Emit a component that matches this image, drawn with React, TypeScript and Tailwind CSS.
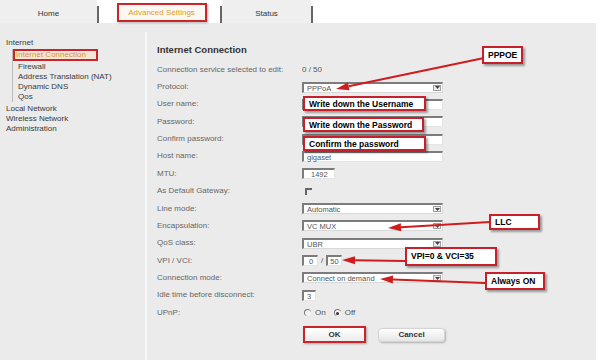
import type { ReactNode } from 'react'

const font = "font-['Liberation_Sans',Arial,sans-serif]"

function Select({ value }: { value: string }) {
  return (
    <div className="flex h-[11px] w-[141px] border-t-2 border-l-2 border-t-[#7c7c7c] border-l-[#7c7c7c] border-b border-r border-b-[#d8d8d8] border-r-[#d8d8d8] bg-white">
      <div className="flex-1 pl-[3px] text-[7.5px] leading-[9px] text-[#555]">{value}</div>
      <div className="m-[1px] flex w-[8px] items-center justify-center border border-[#a0a0a0] bg-[#ececec]">
        <svg width="5" height="3" viewBox="0 0 5 3">
          <path d="M0 0H5L2.5 3Z" fill="#444" />
        </svg>
      </div>
    </div>
  )
}

function Input({ value = '', w = 'w-[141px]', pad = 'pl-[3px]' }: { value?: string; w?: string; pad?: string }) {
  return (
    <div
      className={`h-[11px] ${w} ${pad} border-t-2 border-l-2 border-t-[#7c7c7c] border-l-[#7c7c7c] border-b border-r border-b-[#e4e4e4] border-r-[#e4e4e4] bg-white text-[7.5px] leading-[9px] text-[#555]`}
    >
      {value}
    </div>
  )
}

function Radio({ on }: { on?: boolean }) {
  return (
    <div className="flex h-[7px] w-[7px] items-center justify-center rounded-full border-t border-l border-[#777] bg-[#f4f4f4]">
      {on && <div className="h-[3px] w-[3px] rounded-full bg-[#333]" />}
    </div>
  )
}

const rows: [string, ReactNode][] = [
  ['Connection service selected to edit:', <span className="text-[8px] text-[#555]">0 / 50</span>],
  ['Protocol:', <Select value="PPPoA" />],
  ['User name:', <Input />],
  ['Password:', <Input />],
  ['Confirm password:', <Input />],
  ['Host name:', <Input value="gigaset" />],
  ['MTU:', <Input value="1492" w="w-[33px]" pad="pl-[7px]" />],
  ['As Default Gateway:', <div className="ml-[3px] h-[7px] w-[7px] border-t-2 border-l-2 border-[#666]" />],
  ['Line mode:', <Select value="Automatic" />],
  ['Encapsulation:', <Select value="VC MUX" />],
  ['QoS class:', <Select value="UBR" />],
  [
    'VPI / VCI:',
    <div className="flex items-center gap-[3px] text-[8px] text-[#555]">
      <Input value="0" w="w-[16px]" pad="pl-[5px]" />
      <span>/</span>
      <Input value="50" w="w-[16px]" pad="pl-[2px]" />
    </div>,
  ],
  ['Connection mode:', <Select value="Connect on demand" />],
  ['Idle time before disconnect:', <Input value="3" w="w-[14px]" pad="pl-[3px]" />],
  [
    'UPnP:',
    <div className="flex items-center pl-[2px] text-[8px] text-[#555]">
      <Radio />
      <span className="ml-[4px] mr-[8px]">On</span>
      <Radio on />
      <span className="ml-[4px]">Off</span>
    </div>,
  ],
]

const notes = [
  { text: 'PPPOE', cls: 'left-[482px] top-[46px] w-[41px] h-[18px] pt-[3px]' },
  { text: 'Write down the Username', cls: 'left-[303px] top-[96px] w-[123px] h-[15px] pt-[2px]' },
  { text: 'Write down the Password', cls: 'left-[303px] top-[117px] w-[121px] h-[15px] pt-[2px]' },
  { text: 'Confirm the password', cls: 'left-[303px] top-[136px] w-[123px] h-[15px] pt-[2px]' },
  { text: 'LLC', cls: 'left-[489px] top-[214px] w-[51px] h-[16px] pt-[2px]' },
  { text: 'VPI=0 & VCI=35', cls: 'left-[405px] top-[247px] w-[92px] h-[19px] pt-[3px]' },
  { text: 'Always ON', cls: 'left-[485px] top-[272px] w-[60px] h-[18px] pt-[3px]' },
]

const arrows: [number, number, number, number][] = [
  [484, 58, 336, 89],
  [490, 222, 388, 228],
  [405, 261, 342, 260],
  [485, 283, 380, 279],
]

function Arrow({ a }: { a: [number, number, number, number] }) {
  const [x1, y1, x2, y2] = a
  const len = Math.hypot(x2 - x1, y2 - y1)
  const ux = (x2 - x1) / len
  const uy = (y2 - y1) / len
  const bx = x2 - ux * 13
  const by = y2 - uy * 13
  const px = -uy * 4
  const py = ux * 4
  return (
    <g>
      <line x1={x1} y1={y1} x2={bx} y2={by} stroke="#cf1d1d" strokeWidth="2" />
      <polygon points={`${x2},${y2} ${bx + px},${by + py} ${bx - px},${by - py}`} fill="#cf1d1d" />
    </g>
  )
}

export default function App() {
  return (
    <div className={`relative h-[360px] w-[600px] overflow-hidden bg-white ${font}`}>
      {/* tabs */}
      <div className="flex h-[23px] items-stretch text-[8px]">
        <div className="flex w-[97px] items-center justify-center bg-[#efefef] pt-[5px] text-[#333]">Home</div>
        <div className="mt-[6px] w-[2px] bg-[#666]" />
        <div className="flex w-[121px] items-start justify-center pt-[3px] pl-[4px]">
          <div className="flex h-[19px] w-[90px] items-center justify-center border-2 border-[#c8262b] bg-[#fbf8f2] text-[#e59a2a] shadow-[1px_1px_2px_rgba(0,0,0,0.3)]">
            Advanced Settings
          </div>
        </div>
        <div className="mt-[6px] w-[2px] bg-[#666]" />
        <div className="flex w-[89px] items-center justify-center bg-[#efefef] pt-[5px] text-[#333]">Status</div>
        <div className="mt-[6px] w-[2px] bg-[#666]" />
      </div>

      {/* body */}
      <div className="flex h-[337px] w-[596px] bg-[#ebebeb]">
        <div className="w-[145px] pt-[15px] pl-[6px] text-[8px] leading-[10px] text-[#3a3a3a]">
          <div>Internet</div>
          <div className="ml-[6px] border-l border-[#bdbdbd] pl-[2px]">
            <div className="-ml-[2px] my-[1px] h-[12px] w-[85px] border-2 border-[#c8262b] bg-[#f3e6d6] pl-[1px] text-[8px] leading-[8px] text-[#e0913a]">
              Internet Connection
            </div>
            <div className="pl-[3px]">Firewall</div>
            <div className="pl-[3px]">Address Translation (NAT)</div>
            <div className="pl-[3px]">Dynamic DNS</div>
            <div className="pl-[3px]">Qos</div>
          </div>
          <div className="mt-[2px]">Local Network</div>
          <div>Wireless Network</div>
          <div>Administration</div>
        </div>

        <div className="mt-[9px] flex-1 border-l-2 border-[#f7f7f7] pl-[10px]">
          <div className="mt-[13px] h-[10px] text-[9.5px] font-bold leading-[10px] text-[#333]">Internet Connection</div>
          <div className="mt-[6px] grid grid-cols-[145px_1fr]">
            {rows.map(([label, ctl]) => (
              <div key={label} className="contents">
                <div className="flex h-[17.36px] items-center text-[8px] text-[#666]">{label}</div>
                <div className="flex h-[17.36px] items-center">{ctl}</div>
              </div>
            ))}
          </div>
          <div className="mt-[5px] ml-[146px] flex items-center">
            <div className="flex h-[17px] w-[63px] items-center justify-center border-2 border-[#c8262b] bg-gradient-to-b from-white to-[#ececec] text-[8px] font-bold text-[#333] shadow-[1px_1px_2px_rgba(0,0,0,0.3)]">
              OK
            </div>
            <div className="ml-[12px] flex h-[14px] w-[67px] items-center justify-center rounded-[4px] border border-[#d4d4d4] bg-gradient-to-b from-white to-[#e6e6e6] text-[8px] font-bold text-[#333] shadow-[1px_1px_2px_rgba(0,0,0,0.25)]">
              Cancel
            </div>
          </div>
        </div>
      </div>

      {/* annotations */}
      <svg className="pointer-events-none absolute left-0 top-0" width="600" height="360">
        {arrows.map((a, i) => (
          <Arrow key={i} a={a} />
        ))}
      </svg>
      {notes.map((n) => (
        <div
          key={n.text}
          className={`absolute ${n.cls} border-2 border-[#c8202a] bg-white pl-[4px] text-[8.5px] font-bold leading-[9px] text-black shadow-[2px_2px_2px_rgba(0,0,0,0.35)]`}
        >
          {n.text}
        </div>
      ))}
    </div>
  )
}
